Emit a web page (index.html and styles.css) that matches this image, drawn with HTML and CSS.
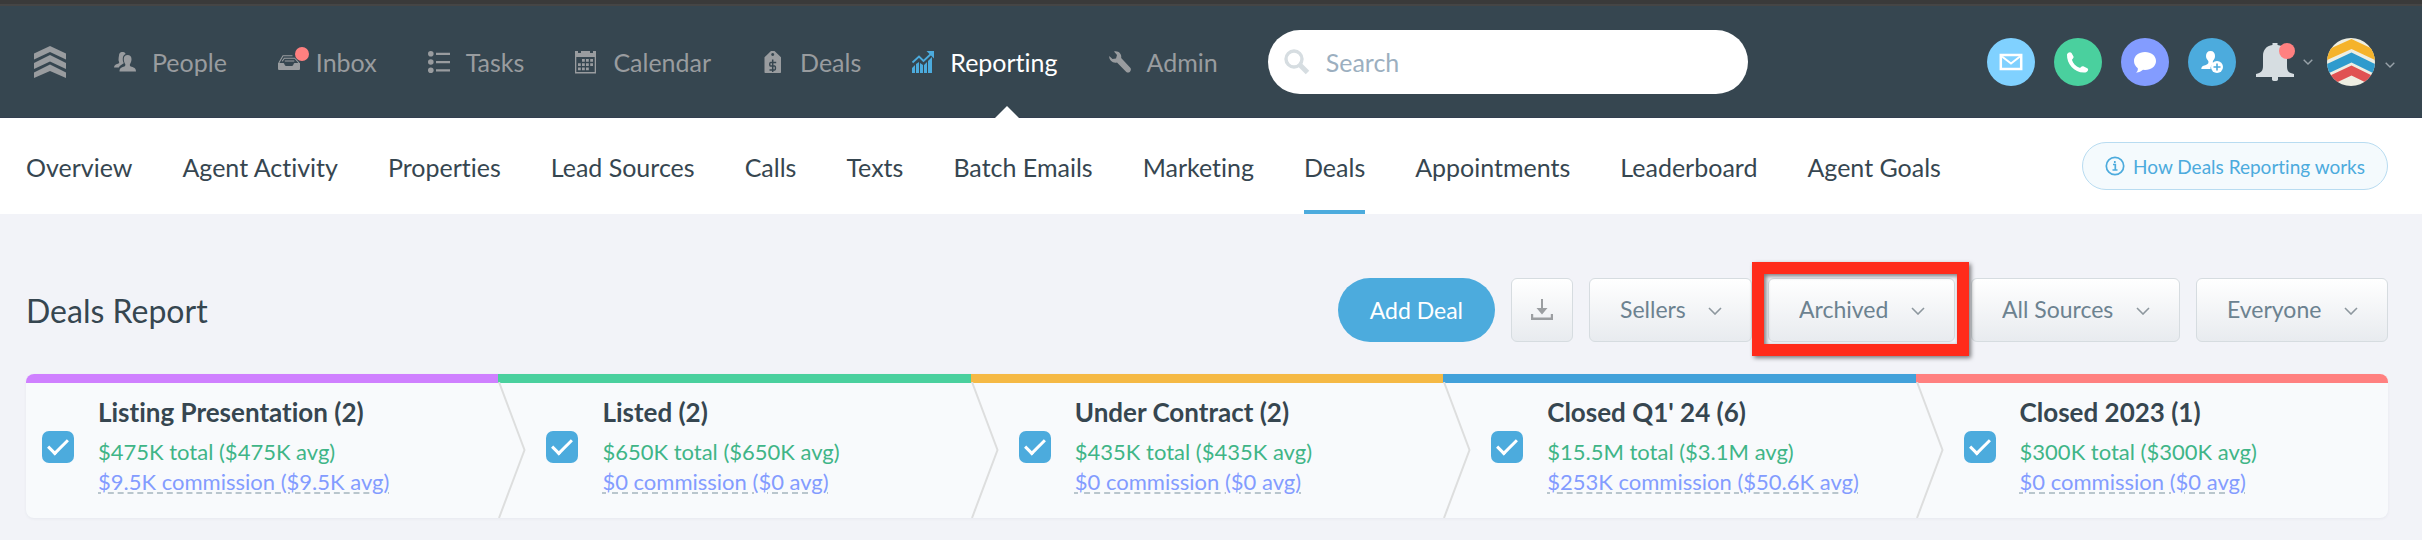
FILE: index.html
```html
<!DOCTYPE html>
<html lang="en">
<head>
<meta charset="utf-8">
<title>Deals Report</title>
<link rel="stylesheet" href="styles.css">
</head>
<body>
<header class="topbar">
  <a class="brand" href="#" aria-label="Home">
    <svg width="32" height="32" viewBox="0 0 32 32"><path d="M0 7.500 16 0l16 7.500v6L16 6 0 13.500zM0 17 16 9l16 8v6L16 15.500 0 23zM0 26.500 16 18.500l16 8v5.500L16 25 0 32z"/></svg>
  </a>
  <nav class="mainnav" aria-label="Main">
    <a class="mainnav-item" href="#">
      <svg class="icon" viewBox="0 0 22 22"><path d="M5 4.500C5 1.800 6.800.6 8.500 1c2-.3 2.900.8 3 2C9.300 4 8.600 6.200 8.800 9c.1 1.500.6 2.300 1 3.200-1.300 1.200-4 1.800-5 4.300H0c.1-2.300 1.700-2.900 3.800-3.700 1.200-.5 1.600-1 1.300-1.800-.9-1.300-.6-3.500-.1-6.500z"/><path d="M9.800 8c0-2.500 1.500-4 3.800-4s3.900 1.500 3.900 4-.8 4-1.600 5.200c-.3 1.500.3 2 1.800 2.600 2.600 1 4.200 1.400 4.300 4.700H5.500c.1-3.300 1.500-3.700 4-4.700 1.500-.6 2.100-1.200 1.800-2.600C10.500 12 9.800 10.500 9.800 8z"/></svg>
      <span>People</span>
    </a>
    <a class="mainnav-item" href="#">
      <span class="icon-wrap">
        <svg class="icon" viewBox="0 0 22 22"><path d="M0 12h5.500c1 0 1 3 2.500 3h6c1.500 0 1.500-3 2.500-3H22v5.500c0 1-.5 1.500-1.500 1.500h-19C.5 19 0 18.500 0 17.500z"/><path d="M.8 12 5 4.700h9.500M4.200 10.300 6.300 7.300H17M6.800 10h9.500M17 7.500l4 4.500" fill="none" stroke="currentColor" stroke-width="1.100"/></svg>
        <span class="dot"></span>
      </span>
      <span>Inbox</span>
    </a>
    <a class="mainnav-item" href="#">
      <svg class="icon" viewBox="0 0 22 22"><circle cx="2.800" cy="2.800" r="2.800"/><circle cx="2.800" cy="11" r="2.800"/><circle cx="2.800" cy="19.200" r="2.800"/><path d="M8 1.700h14v2.300H8zM8 10h14v2.300H8zM8 18.200h14v2.300H8z"/></svg>
      <span>Tasks</span>
    </a>
    <a class="mainnav-item" href="#">
      <svg class="icon" viewBox="0 0 22 22"><path fill-rule="evenodd" d="M0 0h3v2h3V0h9v2h3V0h3v22.500H0zM1.300 6v15h18.400V6z"/><path d="M7 8h2.800v2.800H7zM11 8h2.800v2.800H11zM15.200 8H18v2.800h-2.800zM3 12.200h2.800V15H3zM7 12.200h2.800V15H7zM11 12.200h2.800V15H11zM15.200 12.200H18V15h-2.800zM3 16.500h2.800v2.800H3zM7 16.500h2.800v2.800H7zM11 16.500h2.800v2.800H11z"/></svg>
      <span>Calendar</span>
    </a>
    <a class="mainnav-item" href="#">
      <svg class="icon" viewBox="0 0 22 22"><path fill-rule="evenodd" d="M9 0h3.500L19 6.200V21c0 .7-.3 1-1 1H3.500c-.7 0-1-.3-1-1V6.200zM10.700 2a1.500 1.500 0 1 0 .01 0z"/><path d="M14.200 11.500H8.500c-1 0-1 3.500 0 3.500h4.200c1 0 1 4 0 4H7.500M10.700 8.500v12.500" fill="none" stroke="#364650" stroke-width="1.500"/></svg>
      <span>Deals</span>
    </a>
    <a class="mainnav-item is-active" href="#" aria-current="page">
      <svg class="icon" viewBox="0 0 22 22"><path d="M0 17l3-3v8H0zM4 13l3-2v11H4zM8 12l3 2v8H8zM12 14l3-3v11h-3zM16 10l4-4v16h-4z"/><path d="m.5 11.500 6.500-6L11.500 10 20 2" fill="none" stroke="currentColor" stroke-width="1.800"/><path d="M14.500 0H22v7.500z"/></svg>
      <span>Reporting</span>
    </a>
    <a class="mainnav-item" href="#">
      <svg class="icon" viewBox="0 0 22 22"><path d="M5 .5c4-1.200 8 2 7.200 6.500L21.500 17c1.500 2.500-1.500 6-4.200 4L8 11.500C4 12.500 0 9.500.2 5L3.500 8 7 7.500 8 4z"/></svg>
      <span>Admin</span>
    </a>
  </nav>
  <label class="search">
    <svg width="26" height="26" viewBox="0 0 26 26" fill="none" stroke="#d6dde1"><circle cx="10" cy="10" r="8" stroke-width="3.400"/><path d="m15.500 15.500 8 8" stroke-width="5"/></svg>
    <input class="search-input" type="search" placeholder="Search" aria-label="Search">
  </label>
  <div class="actions">
    <button class="round mail" type="button" aria-label="Email">
      <svg width="24" height="24" viewBox="0 0 24 24" fill="none" stroke="#fff" stroke-width="2.500"><path d="M1.800 5h20.400v14H1.800z"/><path d="m3 6.500 9 7 9-7" stroke-width="2"/></svg>
    </button>
    <button class="round phone" type="button" aria-label="Call">
      <svg width="24" height="24" viewBox="0 0 24 24" fill="#fff"><path d="M1 4.500C2 2 4.500 1.500 5.500 3l2 3.500c.7 1.500-1.500 2.500-1.500 3.500 1 3.500 4 6.500 7.500 7.800 1.200.2 2-2.300 3.800-1.500l4 2c1.800 1.200.5 3.700-2 4.200C9 23.500.5 14 1 4.500z"/></svg>
    </button>
    <button class="round chat" type="button" aria-label="Message">
      <svg width="24" height="24" viewBox="0 0 24 24" fill="#fff"><path d="M12 2c6.200 0 11 3.800 11 9s-4.800 9-11 9l-2-.2C8 21.500 5 23 3 22.500c1.500-1 2-2.500 1.800-4.300C2.500 16.500 1 14 1 11c0-5.200 4.800-9 11-9z"/></svg>
    </button>
    <button class="round add" type="button" aria-label="Add person">
      <svg width="24" height="24" viewBox="0 0 24 24" fill="#fff"><path d="M6 6c0-3 1.500-5 4.500-5S15 3 15 6c0 2-.8 3.500-2 5-.3 1-.3 2 .5 2.500-2 1.500-3.300 3.500-3 5.500H1.300c.2-3 2-3 5-4.200C8.500 14 8.700 12.500 8.300 11 7 9.500 6 8 6 6z"/><circle cx="17" cy="17" r="6"/><path d="M17 13.500v7M13.500 17h7" stroke="#4cabdd" stroke-width="1.600"/></svg>
    </button>
    <button class="plain bell" type="button" aria-label="Notifications">
      <span class="icon-wrap">
        <svg width="40" height="40" viewBox="0 0 40 40" fill="#d6dde1"><path d="M17.500 3V1h5v2c6.500 1 9.500 5 9.500 11v10c0 5.500 2 7 7 8v3H1v-3c5-1 7-3 7-8V14c0-6 3-10 9.500-11zM17 35h6v2.500c0 2-6 2-6 0z"/></svg>
        <span class="dot dot-bell"></span>
      </span>
      <svg class="caret" viewBox="0 0 10 6"><path d="m.7.7 4.300 4.300L9.300.7"/></svg>
    </button>
    <button class="plain account" type="button" aria-label="Account">
      <svg class="avatar" width="48" height="48" viewBox="0 0 48 48"><path fill="#eeeee2" d="M0 0h48v48H0z"/><path fill="#f5b32b" d="M0 12 24.500 1 48 12v10L24.500 11 0 22z"/><path fill="#2f9bcd" d="M0 26 24.500 14.500 48 26v10L24.500 24.500 0 36z"/><path fill="#e05252" d="M0 39 24.500 27.500 48 39v10L24.500 37.500 0 49z"/></svg>
      <svg class="caret" viewBox="0 0 10 6"><path d="m.7.7 4.300 4.300L9.300.7"/></svg>
    </button>
  </div>
</header>

<div class="subnav">
  <nav class="tabs" aria-label="Reporting">
    <a class="tab" href="#">Overview</a>
    <a class="tab" href="#">Agent Activity</a>
    <a class="tab" href="#">Properties</a>
    <a class="tab" href="#">Lead Sources</a>
    <a class="tab" href="#">Calls</a>
    <a class="tab" href="#">Texts</a>
    <a class="tab" href="#">Batch Emails</a>
    <a class="tab" href="#">Marketing</a>
    <a class="tab is-current" href="#" aria-current="page">Deals</a>
    <a class="tab" href="#">Appointments</a>
    <a class="tab" href="#">Leaderboard</a>
    <a class="tab" href="#">Agent Goals</a>
  </nav>
  <a class="help" href="#">
    <svg width="20" height="20" viewBox="0 0 20 20" fill="none" stroke="currentColor"><circle cx="10" cy="10" r="8.700" stroke-width="1.700"/><path d="M8 8.500h2.300V14M7.500 14h5M9.800 5v2" stroke-width="1.700"/></svg>
    <span>How Deals Reporting works</span>
  </a>
</div>

<main class="page">
  <div class="pagehead">
    <h1 class="title">Deals Report</h1>
    <div class="tools">
      <button class="primary" type="button">Add Deal</button>
      <button class="download" type="button" aria-label="Download">
        <svg width="22" height="22" viewBox="0 0 22 22" fill="#9b9ea1"><path d="M10 0h2v9h4.500L11 15.500 5.500 9H10zM0 15h2.200v3.500h17.600V15H22v6H0z"/></svg>
      </button>
      <div class="picker">
        <select class="picker-select" aria-label="Deal side"><option>Sellers</option></select>
        <svg class="picker-caret" viewBox="0 0 14 8"><path d="m1 1 6 6 6-6"/></svg>
      </div>
      <div class="picker is-marked">
        <select class="picker-select" aria-label="Status"><option>Archived</option></select>
        <svg class="picker-caret" viewBox="0 0 14 8"><path d="m1 1 6 6 6-6"/></svg>
      </div>
      <div class="picker">
        <select class="picker-select" aria-label="Source"><option>All Sources</option></select>
        <svg class="picker-caret" viewBox="0 0 14 8"><path d="m1 1 6 6 6-6"/></svg>
      </div>
      <div class="picker">
        <select class="picker-select" aria-label="Agent"><option>Everyone</option></select>
        <svg class="picker-caret" viewBox="0 0 14 8"><path d="m1 1 6 6 6-6"/></svg>
      </div>
    </div>
  </div>

  <section class="stages" aria-label="Stages">
    <div class="stage purple">
      <input class="check" type="checkbox" id="s1" checked>
      <div class="stage-text">
        <label class="stage-name" for="s1">Listing Presentation (2)</label>
        <span class="total">$475K total ($475K avg)</span>
        <a class="commission" href="#">$9.5K commission ($9.5K avg)</a>
      </div>
    </div>
    <div class="stage green">
      <svg class="divider" viewBox="0 0 28 136" preserveAspectRatio="none"><path d="M1 0 26.500 68 1 136"/></svg>
      <input class="check" type="checkbox" id="s2" checked>
      <div class="stage-text">
        <label class="stage-name" for="s2">Listed (2)</label>
        <span class="total">$650K total ($650K avg)</span>
        <a class="commission" href="#">$0 commission ($0 avg)</a>
      </div>
    </div>
    <div class="stage yellow">
      <svg class="divider" viewBox="0 0 28 136" preserveAspectRatio="none"><path d="M1 0 26.500 68 1 136"/></svg>
      <input class="check" type="checkbox" id="s3" checked>
      <div class="stage-text">
        <label class="stage-name" for="s3">Under Contract (2)</label>
        <span class="total">$435K total ($435K avg)</span>
        <a class="commission" href="#">$0 commission ($0 avg)</a>
      </div>
    </div>
    <div class="stage blue">
      <svg class="divider" viewBox="0 0 28 136" preserveAspectRatio="none"><path d="M1 0 26.500 68 1 136"/></svg>
      <input class="check" type="checkbox" id="s4" checked>
      <div class="stage-text">
        <label class="stage-name" for="s4">Closed Q1' 24 (6)</label>
        <span class="total">$15.5M total ($3.1M avg)</span>
        <a class="commission" href="#">$253K commission ($50.6K avg)</a>
      </div>
    </div>
    <div class="stage red">
      <svg class="divider" viewBox="0 0 28 136" preserveAspectRatio="none"><path d="M1 0 26.500 68 1 136"/></svg>
      <input class="check" type="checkbox" id="s5" checked>
      <div class="stage-text">
        <label class="stage-name" for="s5">Closed 2023 (1)</label>
        <span class="total">$300K total ($300K avg)</span>
        <a class="commission" href="#">$0 commission ($0 avg)</a>
      </div>
    </div>
  </section>
</main>
</body>
</html>
```

FILE: styles.css
```css
* { box-sizing: border-box; }

body {
  margin: 0;
  background: #f2f3f8;
  color: #364650;
  font-family: Lato, "Open Sans", sans-serif;
  font-size: 22px;
  font-variant-ligatures: none;
}

a { color: inherit; text-decoration: none; }
button, input, select { font: inherit; }
button { border: 0; padding: 0; cursor: pointer; }
svg { display: block; flex: none; }

/* Top bar */
.topbar {
  display: flex;
  align-items: center;
  min-height: 118px;
  padding: 6px 27px 0 34px;
  background: linear-gradient(#3a3a3a 4px, #454545 4px, #454545 6px, transparent 6px) #364650;
  border-bottom: 1px solid #333f50;
  color: #999c9f;
}
.brand { fill: #999c9f; margin-right: 48px; }

.mainnav { display: flex; align-self: stretch; gap: 51px; }
.mainnav-item {
  position: relative;
  display: flex;
  align-items: center;
  gap: 16px;
  font-size: 25px;
}
.icon { width: 22px; height: 22px; fill: currentColor; overflow: visible; }
.icon-wrap { position: relative; }
.dot {
  position: absolute;
  top: -4px;
  left: 17px;
  width: 14px;
  height: 14px;
  border-radius: 50%;
  background: #ff8080;
}
.dot-bell { top: 1px; left: 24px; width: 16px; height: 16px; }

.mainnav-item.is-active { color: #fff; }
.mainnav-item.is-active .icon { color: #4cabdd; }
.mainnav-item.is-active::after {
  content: "";
  position: absolute;
  bottom: -1px;
  left: 50%;
  margin-left: 10px;
  border: 12px solid transparent;
  border-top: 0;
  border-bottom-color: #fff;
}

.search {
  display: flex;
  align-items: center;
  gap: 16px;
  width: 480px;
  height: 64px;
  margin-left: 50px;
  padding: 0 16px;
  border-radius: 32px;
  background: #fff;
}
.search-input {
  flex: 1;
  min-width: 0;
  padding: 0;
  border: 0;
  outline: 0;
  background: none;
  font-size: 25px;
}
.search-input::placeholder { color: #9cafc0; }

.actions { display: flex; align-items: center; gap: 19px; margin-left: auto; }
.round {
  display: grid;
  place-items: center;
  width: 48px;
  height: 48px;
  border-radius: 50%;
}
.mail { background: #80d1ff; }
.phone { background: #4ad09e; }
.chat { background: #839cff; }
.add { background: #4cabdd; }
.plain { display: flex; align-items: center; gap: 8px; background: none; }
.bell { margin-right: -5px; }
.avatar { border-radius: 50%; }
.caret { width: 10px; height: 6px; fill: none; stroke: #98a2a9; stroke-width: 1.4; }
.account .caret { margin: 6px 0 0 2px; }

/* Report tabs */
.subnav {
  display: flex;
  justify-content: space-between;
  align-items: center;
  padding: 0 34px 0 26px;
  background: #fff;
}
.tabs { display: flex; gap: 50px; }
.tab {
  height: 96px;
  line-height: 98px;
  font-size: 25px;
  white-space: nowrap;
}
.tab.is-current { border-bottom: 4px solid #4cabdd; }
.help {
  display: flex;
  align-items: center;
  gap: 8px;
  height: 48px;
  padding: 0 22px;
  border: 1px solid #b8dcf1;
  border-radius: 24px;
  background: #f4fafd;
  color: #4cabdd;
  font-size: 19px;
}

/* Page heading and filters */
.page { padding: 64px 34px 22px 26px; }
.pagehead { display: flex; justify-content: space-between; align-items: center; }
.title { margin: 0; font-size: 32px; font-weight: 400; }
.tools { display: flex; gap: 16px; font-size: 23px; }
.primary {
  height: 64px;
  padding: 0 32px;
  border-radius: 32px;
  background: #4cabdd;
  color: #fff;
}
.download, .picker-select {
  height: 64px;
  border: 1px solid #d6dce0;
  border-radius: 6px;
  background: linear-gradient(#fff, #e8ebef);
}
.download { display: grid; place-items: center; width: 62px; }
.picker { position: relative; }
.picker-select {
  appearance: none;
  padding: 0 65px 2px 30px;
  color: #6c8290;
}
.picker-caret {
  position: absolute;
  top: 29px;
  right: 30px;
  width: 14px;
  height: 8px;
  fill: none;
  stroke: #8d979e;
  stroke-width: 1.6;
  pointer-events: none;
}
.is-marked::after {
  content: "";
  position: absolute;
  z-index: 1;
  inset: -16px -14px -14px -16px;
  border: 12px solid #ff2b1a;
  filter: drop-shadow(2px 2px 2px rgba(0, 0, 0, 0.5));
  pointer-events: none;
}

/* Stage cards */
.stages {
  display: grid;
  grid-template-columns: repeat(5, 1fr);
  margin-top: 32px;
  overflow: hidden;
  border-radius: 8px;
  background: #f8fafc;
  box-shadow: 0 1px 3px rgba(54, 70, 80, 0.06);
}
.stage {
  position: relative;
  display: flex;
  align-items: center;
  gap: 24px;
  height: 144px;
  padding: 0 16px 8px 48px;
  border-top: 9px solid;
}
.stage:first-child { padding-left: 16px; }
.purple { border-color: #cf80ff; }
.green { border-color: #4ad09e; }
.yellow { border-color: #f5b945; }
.blue { border-color: #42a1da; }
.red { border-color: #ff8080; }
.divider {
  position: absolute;
  top: -1px;
  left: 0;
  width: 28px;
  height: 136px;
  fill: none;
  stroke: #dddede;
  stroke-width: 2;
}
.check {
  flex: none;
  appearance: none;
  width: 32px;
  height: 32px;
  margin: 0;
  border-radius: 7px;
  background: #4cabdd;
}
.check:checked::before {
  content: "";
  display: block;
  box-sizing: border-box;
  width: 20px;
  height: 11px;
  margin: 8px 0 0 6px;
  border: solid #fff;
  border-width: 0 0 3px 3px;
  transform: rotate(-45deg);
}
.stage-text {
  display: flex;
  flex-direction: column;
  align-items: flex-start;
  line-height: 30px;
  white-space: nowrap;
}
.stage-name { margin-bottom: 10px; font-size: 26px; font-weight: 700; }
.total { color: #3fb587; }
.commission {
  color: #839cff;
  text-decoration: underline dashed #b9c6cd 2px;
  text-underline-offset: 3px;
}
```
